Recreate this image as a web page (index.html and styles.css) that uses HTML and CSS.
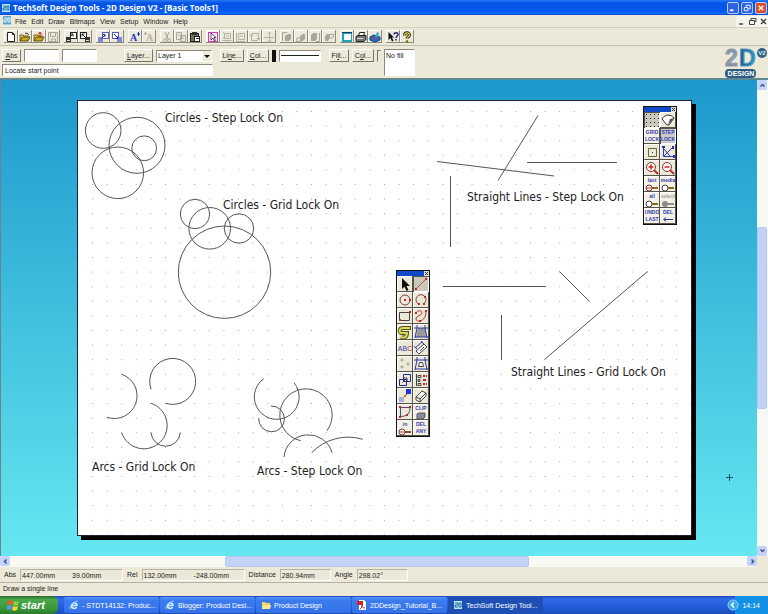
FILE: index.html
```
<!DOCTYPE html>
<html lang="en">
<head>
    <meta charset="utf-8">
    <title>TechSoft Design Tools - 2D Design V2 - [Basic Tools1]</title>
    <link rel="stylesheet" href="styles.css">
</head>
<body>
    <header class="title-bar">
        <svg class="app-icon" width="10" height="10" viewBox="0 0 10 10"><rect x="1" y="1" width="8" height="8" fill="#bfe6f5"/><path d="M2 3h3v2H2v2h3M6 3h2v4H6z" fill="none" stroke="#1b6f9c"/></svg>
        <h1>TechSoft Design Tools - 2D Design V2 - [Basic Tools1]</h1>
        <button class="win-btn" aria-label="Minimize"><svg viewBox="0 0 11 11"><path d="M2 8h4" stroke="#fff" stroke-width="2"/></svg></button>
        <button class="win-btn" aria-label="Restore"><svg viewBox="0 0 11 11"><path d="M4.500 4V2.500H9v4H7M2.500 5h4v3.500h-4z" fill="none" stroke="#fff"/></svg></button>
        <button class="win-btn close" aria-label="Close"><svg viewBox="0 0 11 11"><path d="M3 3l5 5M8 3l-5 5" stroke="#fff" stroke-width="1.5"/></svg></button>
    </header>

    <nav class="menu-bar">
        <svg class="app-icon" width="10" height="10" viewBox="0 0 10 10"><rect x="1" y="0" width="8" height="9" fill="#5aa6c8"/><path d="M2 2h3v2H2v2h3M6 2h2v4H6zM0 9h9" fill="none" stroke="#e4f6fc"/></svg>
        <button>File</button>
        <button>Edit</button>
        <button>Draw</button>
        <button>Bitmaps</button>
        <button>View</button>
        <button>Setup</button>
        <button>Window</button>
        <button>Help</button>
        <div class="doc-controls">
            <button aria-label="Minimize document"><svg width="9" height="9" viewBox="0 0 9 9"><path d="M2 7h4" stroke="#444" stroke-width="1.5"/></svg></button>
            <button aria-label="Restore document"><svg width="9" height="9" viewBox="0 0 9 9"><path d="M3 3.500V1.500h5v3H6.500M1.500 3.500h5v4h-5z" fill="none" stroke="#444"/></svg></button>
            <button aria-label="Close document"><svg width="9" height="9" viewBox="0 0 9 9"><path d="M2 2l5 5M7 2L2 7" stroke="#444" stroke-width="1.5"/></svg></button>
        </div>
    </nav>

    <div class="toolbar">
        <div class="group">
            <button aria-label="New"><svg viewBox="0 0 12 12"><path d="M2.500 1.500h5l2 2v7h-7z" fill="#fff" stroke="#222"/><path d="M7.500 1.500v2h2" fill="none" stroke="#222"/></svg></button>
            <button aria-label="Open"><svg viewBox="0 0 12 12"><path d="M1 10V4h3l1 1h4v2" fill="#f5e36a" stroke="#6b5d10"/><path d="M1 10l2-4h8l-2 4z" fill="#c9a227" stroke="#5d4c08"/><path d="M6 2.500c2-1 3 0 3.500 1.500" fill="none" stroke="#222"/></svg></button>
            <button aria-label="Insert"><svg viewBox="0 0 12 12"><path d="M1 10V4h3l1 1h4v2" fill="#f5e36a" stroke="#6b5d10"/><path d="M1 10l2-4h8l-2 4z" fill="#c9a227" stroke="#5d4c08"/><path d="M7 6V2M5 3.500L7 1l2 2.500" fill="none" stroke="#c22"/></svg></button>
            <button aria-label="Save" disabled><svg viewBox="0 0 12 12"><path d="M1.500 1.500h9v9h-9zM3.500 1.500v4h5v-4M4.500 10V8h4v2" fill="none" stroke="#aaa79a"/></svg></button>
        </div>
        <div class="group">
            <button aria-label="Import picture"><svg viewBox="0 0 12 12"><rect x="5.500" y="1.500" width="6" height="6" fill="#fff" stroke="#222"/><path d="M1 6h5v5H1z" fill="#333"/><path d="M4 7l4-4M5.500 3H8v2.500" fill="none" stroke="#222"/><path d="M2 9.500h3" stroke="#ddd"/></svg></button>
            <button aria-label="Export picture"><svg viewBox="0 0 12 12"><rect x="1.500" y="1.500" width="6" height="6" fill="#fff" stroke="#222"/><path d="M6 6h5v5H6z" fill="#333"/><path d="M3 3l5 5M3 5.500V3h2.500" fill="none" stroke="#222"/><path d="M7 9.500h3" stroke="#ddd"/></svg></button>
        </div>
        <div class="group">
            <button aria-label="Load section"><svg viewBox="0 0 12 12"><rect x="5.500" y="1.500" width="6" height="6" fill="#fff" stroke="#5561b5"/><path d="M1 6h5v5H1z" fill="#7f8bd6"/><path d="M4 8l4-4M5.500 3.500H8V6" fill="none" stroke="#1f2a96"/></svg></button>
            <button aria-label="Save section"><svg viewBox="0 0 12 12"><rect x="1.500" y="1.500" width="6" height="6" fill="#fff" stroke="#5561b5"/><path d="M6 6h5v5H6z" fill="#7f8bd6"/><path d="M3 3l4 4M4.500 7.500H7V5" fill="none" stroke="#1f2a96"/></svg></button>
        </div>
        <div class="group">
            <button aria-label="Text style"><svg viewBox="0 0 12 12"><text class="glyph blue" x="1" y="10">A</text><path d="M9.500 1v4M8 3h3" stroke="#2231c0"/></svg></button>
            <button aria-label="Edit text" disabled><svg viewBox="0 0 12 12"><text class="glyph grey" x="3" y="10">A</text><path d="M1 2.500h3M2.500 1v3" stroke="#aaa79a"/></svg></button>
        </div>
        <div class="group">
            <button aria-label="Cut" disabled><svg viewBox="0 0 12 12"><path d="M4 1l3 7M8 1L5 8" stroke="#aaa79a"/><circle cx="4" cy="9.500" r="1.500" fill="none" stroke="#aaa79a"/><circle cx="8" cy="9.500" r="1.500" fill="none" stroke="#aaa79a"/></svg></button>
            <button aria-label="Copy" disabled><svg viewBox="0 0 12 12"><path d="M1.500 1.500h5v7h-5zM5.500 4.500h5v6h-5zM3 4h2M7 7h2" fill="none" stroke="#aaa79a"/></svg></button>
            <button aria-label="Paste"><svg viewBox="0 0 12 12"><rect x="1.500" y="2.500" width="8" height="8" fill="#75744a" stroke="#222"/><rect x="3" y="1" width="5" height="3" fill="#333"/><rect x="5.500" y="5.500" width="5" height="5" fill="#fff" stroke="#223"/><path d="M7 7.500h3" stroke="#334"/></svg></button>
        </div>
        <div class="group">
            <button aria-label="Select" class="pressed"><svg viewBox="0 0 12 12"><rect x="1.500" y="1.500" width="9" height="9" fill="#fbe3f6" stroke="#d03cb8"/><path d="M4 2v7l2-2 1.500 3 1-.5L7 6.500h2z" fill="#fff" stroke="#333" stroke-width=".8"/></svg></button>
            <button aria-label="Group" disabled><svg viewBox="0 0 12 12"><path d="M1.500 9.500h9M3.500 2.500h6v5h-6zM2 2h1M5 5h3M2 7h1" fill="none" stroke="#b5b2a4"/></svg></button>
            <button aria-label="Ungroup" disabled><svg viewBox="0 0 12 12"><path d="M1.500 2v8.500H10M3.500 2.500h6v6h-6zM5 5h3" fill="none" stroke="#b5b2a4"/></svg></button>
            <button aria-label="Rotate" disabled><svg viewBox="0 0 12 12"><path d="M3 2.500h6.500V9M9 9.500H2.500V4M1 5l1.500-2L4 5M8 7l1.500 2L11 7" fill="none" stroke="#b5b2a4"/></svg></button>
            <button aria-label="Move" disabled><svg viewBox="0 0 12 12"><path d="M6.500 1v10M1 6.500h10M5 2.500L6.500 1 8 2.500M5 9.500L6.500 11 8 9.500" fill="none" stroke="#b5b2a4"/></svg></button>
        </div>
        <div class="group">
            <button aria-label="Bring to front" disabled><svg viewBox="0 0 12 12"><path d="M4 5l3-2h3v5l-2 2H4z" fill="#aaa79a"/><path d="M1.500 10V1.500H6" fill="none" stroke="#aaa79a"/></svg></button>
            <button aria-label="Send to back" disabled><svg viewBox="0 0 12 12"><path d="M5 5l3-2h2v5l-2 2H5z" fill="#aaa79a"/><path d="M1 10.500h5V7H2z" fill="none" stroke="#aaa79a"/></svg></button>
            <button aria-label="Forward one" disabled><svg viewBox="0 0 12 12"><path d="M2 4l2-2h4v6l-2 2H2z" fill="#aaa79a"/><path d="M10.500 2v8.500H7" fill="none" stroke="#aaa79a"/></svg></button>
            <button aria-label="Back one" disabled><svg viewBox="0 0 12 12"><path d="M2 5l2-2h3v4l-2 3H2z" fill="#aaa79a"/><path d="M7 3.500h4L9.500 7H7" fill="none" stroke="#aaa79a"/></svg></button>
        </div>
        <div class="group">
            <button aria-label="Full screen"><svg viewBox="0 0 12 12"><rect x="1" y="1" width="10" height="10" fill="#18a7b0"/><rect x="3" y="3" width="7" height="6" fill="#fff"/><path d="M1 1.500h10" stroke="#137"/></svg></button>
            <button aria-label="Print"><svg viewBox="0 0 12 12"><path d="M3.500 5l1-3.500h5L8.500 5" fill="#fff" stroke="#222"/><path d="M1 5.500l2-1h8v4l-2 2H1z" fill="#777" stroke="#222"/><path d="M2 7.500h6" stroke="#ddd"/></svg></button>
            <button aria-label="Cutter"><svg viewBox="0 0 12 12"><path d="M1 6l4-2 6 2v3l-5 2-5-2z" fill="#1f6fc4" stroke="#123a80"/><path d="M6 6l2-5 2 1-1 5z" fill="#35b0d6"/><path d="M3 6l2 2 4-2" fill="none" stroke="#d33"/></svg></button>
        </div>
        <div class="group">
            <button aria-label="Context help"><svg viewBox="0 0 12 12"><path d="M1.500 1v8l2-2 1.500 3.500 1.500-.7L5 6.500h2z" fill="#111"/><path d="M7 3.500C7 1 11 1 11 3.500c0 1.500-2 1.500-2 3.500M9 8v1.500" fill="none" stroke="#26268e" stroke-width="1.5"/></svg></button>
            <button aria-label="Help"><svg viewBox="0 0 12 12"><path d="M3.500 4.500c0-3.500 5-3.500 5-.5 0 1.500-2.500 2-2.500 3.500" fill="none" stroke="#222" stroke-width="3"/><path d="M3.500 4.500c0-3.500 5-3.500 5-.5 0 1.500-2.500 2-2.500 3.500" fill="none" stroke="#e9dc3a" stroke-width="1.2"/><circle cx="6" cy="10.500" r="1.200" fill="#6b6410"/></svg></button>
        </div>
    </div>

    <div class="options">
        <div class="options-main">
            <div class="options-row">
                <button class="push abs"><u>A</u>bs</button>
                <input type="text" class="coord" aria-label="X coordinate">
                <input type="text" class="coord" aria-label="Y coordinate">
                <button class="push layer"><u>L</u>ayer...</button>
                <div class="select-wrap">
                    <select aria-label="Layer"><option>Layer 1</option></select>
                    <svg width="8" height="10" viewBox="0 0 8 10"><path d="M1 4h6L4 7z" fill="#111"/></svg>
                </div>
                <button class="push line">Li<u>n</u>e...</button>
                <button class="push col"><u>C</u>ol...</button>
                <span class="swatch black"></span>
                <span class="line-sample"><span></span></span>
                <button class="push fill">Fi<u>l</u>l...</button>
                <button class="push col">C<u>o</u>l...</button>
                <span class="swatch"></span>
            </div>
            <div class="prompt">Locate start point</div>
        </div>
        <div class="fill-box">No fill</div>
        <svg class="logo" width="44" height="32" viewBox="0 0 44 32">
            <defs>
                <linearGradient id="steel" x1="0" y1="0" x2="0" y2="1"><stop offset="0" stop-color="#71879f"/><stop offset=".5" stop-color="#9aa7b5"/><stop offset="1" stop-color="#6d7f95"/></linearGradient>
                <linearGradient id="sea" x1="0" y1="0" x2="1" y2="0"><stop offset="0" stop-color="#1b4f86"/><stop offset="1" stop-color="#2a9ac8"/></linearGradient>
            </defs>
            <text class="logo-big" x="1" y="19" fill="url(#steel)" stroke="#8c9bac">2</text>
            <text class="logo-big" x="15" y="19" fill="url(#sea)" stroke="#5b9cc4" stroke-width="1">D</text>
            <rect x="1" y="22" width="31" height="9" rx="4" fill="#2d5b82"/>
            <text class="logo-small" x="17" y="29" text-anchor="middle" fill="#fff">DESIGN</text>
            <circle cx="38" cy="6" r="5" fill="#2d6187"/>
            <text class="logo-tiny" x="38" y="8" text-anchor="middle" fill="#d9ecf5">V2</text>
        </svg>
    </div>

    <main class="workspace">
        <div class="desk">
            <div class="sheet">
                <svg class="drawing" width="100%" height="100%">
                    <defs>
                        <pattern id="grid" x="14" y="10" width="14.6" height="14.6" patternUnits="userSpaceOnUse"><rect width="1" height="1" fill="#a4a4a4"/></pattern>
                    </defs>
                    <rect width="100%" height="100%" fill="url(#grid)"/>
                    <g class="ink" transform="translate(-78 -101)">
                        <!-- circles, step lock -->
                        <circle cx="103.2" cy="130.5" r="17.8"/>
                        <circle cx="137" cy="145.3" r="28"/>
                        <circle cx="144.2" cy="148.3" r="12.4"/>
                        <circle cx="117.8" cy="172.8" r="25.8"/>
                        <!-- circles, grid lock -->
                        <circle cx="195" cy="214" r="14.7"/>
                        <circle cx="209.7" cy="228.3" r="20.8"/>
                        <circle cx="239" cy="228.5" r="14.7"/>
                        <circle cx="224.5" cy="272.2" r="46.2"/>
                        <!-- arcs, grid lock -->
                        <path d="M121.7 374.3A22.7 22.7 0 0 1 107 417.3"/>
                        <path d="M151 389A23 23 0 1 1 165.7 403.3"/>
                        <path d="M151 403.3A23.3 23.3 0 1 1 121.7 432.7"/>
                        <path d="M151 432.7A14.7 14.7 0 0 0 180.3 432.7"/>
                        <!-- arcs, step lock -->
                        <path d="M263.7 378.7A22.4 22.4 0 1 0 294 382.7"/>
                        <path d="M271 406A12.9 12.9 0 1 1 258.7 418"/>
                        <path d="M327 430.7A26.2 26.2 0 1 0 300.7 440.7"/>
                        <path d="M284 457A24.5 24.5 0 0 1 332 452.7"/>
                        <path d="M311.7 452.7A50.5 50.5 0 0 1 362.7 439.3"/>
                        <!-- lines, step lock -->
                        <path d="M437 161.5L554 176M538 115.5L498 180.5M527 162.5H617M450.5 176V247"/>
                        <!-- lines, grid lock -->
                        <path d="M443 286.5H546M559.5 271.5L589.5 301.5M647.5 271.5L544.5 359.5M501.5 315V360"/>
                    </g>
                    <g class="label" transform="translate(-78 -101)">
                        <text x="165" y="122">Circles - Step Lock On</text>
                        <text x="223" y="209">Circles - Grid Lock On</text>
                        <text x="467" y="201">Straight Lines - Step Lock On</text>
                        <text x="511" y="376">Straight Lines - Grid Lock On</text>
                        <text x="92" y="471">Arcs - Grid Lock On</text>
                        <text x="257" y="475">Arcs - Step Lock On</text>
                    </g>
                </svg>

                <div class="palette tools">
                    <div class="palette-title"><button aria-label="Close tools"><svg viewBox="0 0 5 5"><path d="M1 1l3 3M4 1L1 4" stroke="#333"/></svg></button></div>
                    <div class="palette-grid">
                        <button aria-label="Select"><svg viewBox="0 0 16 16"><path d="M5 2v11l2.500-2.300L9.500 15l2-1-2-4H13z" fill="#111"/></svg></button>
                        <button aria-label="Line" class="pressed"><svg viewBox="0 0 16 16"><path d="M3 13L13 3" stroke="#b55"/><path d="M2 12h2v2H2zM12 2h2v2h-2z" fill="#c22"/></svg></button>
                        <button aria-label="Circle"><svg viewBox="0 0 16 16"><circle cx="8" cy="8" r="5" fill="none" stroke="#7a4040"/><path d="M7 7h2v2H7zM12 7h2v2h-2z" fill="#c22"/></svg></button>
                        <button aria-label="Arc"><svg viewBox="0 0 16 16"><path d="M5.500 12A5 5 0 1 1 10.500 12" fill="none" stroke="#8a4040"/><path d="M5 11h2v2H5zM10 11h2v2h-2zM11 4h2v2h-2z" fill="#c22"/></svg></button>
                        <button aria-label="Rectangle"><svg viewBox="0 0 16 16"><path d="M2.500 4.500h10v8h-10z" fill="none" stroke="#444"/><path d="M2 11h2v2H2zM12 3h2v2h-2z" fill="#c22"/></svg></button>
                        <button aria-label="Curve"><svg viewBox="0 0 16 16"><path d="M3 5c1-3 6-3 6 0 0 2-6 3-6 6 0 4 10 3 10-7" fill="none" stroke="#a33"/><path d="M2 4h2v2H2zM12 2h2v2h-2zM6 12h2v2H6z" fill="#c22"/></svg></button>
                        <button aria-label="Thick path"><svg viewBox="0 0 16 16"><path d="M14 4H6C2 4 2 8 4 9h6c0 5-4 5-6 4" fill="none" stroke="#555511" stroke-width="4"/><path d="M13 4H6C2 4 2 8 4 9h6c0 5-4 5-6 4" fill="none" stroke="#d6d65a" stroke-width="2"/></svg></button>
                        <button aria-label="Fill"><svg viewBox="0 0 16 16"><path d="M5 4h7l1 9H3z" fill="#999"/><path d="M4 1v3H1M12 1v3h3M2 13h13M4 4L2 14M12 4l2 10M4 4h8" fill="none" stroke="#2a39a8"/></svg></button>
                        <button aria-label="Text"><svg viewBox="0 0 16 16"><text class="abc" x="8" y="11" text-anchor="middle">AB<tspan fill="#b22">C</tspan></text></svg></button>
                        <button aria-label="Dimension"><svg viewBox="0 0 16 16"><path d="M3 11l8-7 3 3-8 7z" fill="#fff" stroke="#444"/><path d="M2 8l7-6M1 6l3 3M8 1l3 3M7 11l4-4" stroke="#2a39a8" fill="none"/></svg></button>
                        <button aria-label="Points"><svg viewBox="0 0 16 16"><g fill="none" stroke="#9a9a8c"><circle cx="5" cy="4" r="1"/><circle cx="11" cy="8" r="1"/><circle cx="5" cy="11" r="1"/></g></svg></button>
                        <button aria-label="Contour"><svg viewBox="0 0 16 16"><path d="M4 1v3H1M12 1v3h3M2 13h13M4 4L2 14M12 4l2 10M4 4h8" fill="none" stroke="#2a39a8"/><path d="M6.500 6.500h3l1 4h-5z" fill="#fff" stroke="#444"/></svg></button>
                        <button aria-label="Copy shape"><svg viewBox="0 0 16 16"><path d="M6.500 2.500h7v7h-7zM2.500 7.500h7v6h-7z" fill="none" stroke="#222d9c"/><path d="M5.500 10.500l4-4M7 6h3v3" fill="none" stroke="#444"/></svg></button>
                        <button aria-label="Align"><svg viewBox="0 0 16 16"><path d="M3.500 2v12M5 3.500h3v2H5zM5 7.500h2v2H5zM5 11.500h3v2H5z" fill="none" stroke="#444"/><path d="M10 3h2v2h-2zM13 3h1v2h-1zM10 7h3v2h-3zM10 11h2v2h-2zM13 11h1v2h-1z" fill="#c22"/></svg></button>
                        <button aria-label="Transform"><svg viewBox="0 0 16 16"><path d="M9 1h5v5H9z" fill="#2231d8"/><path d="M2 9h5v5H2z" fill="#a9b2dc"/><path d="M7 9l3-3" stroke="#444"/><path d="M7 7h2v2H7z" fill="#c63"/></svg></button>
                        <button aria-label="Delete part"><svg viewBox="0 0 16 16"><path d="M3 9l6-6 4 2v3l-6 6-4-2zM3 9l4 2 6-6M7 11v3" fill="#fff" stroke="#444"/></svg></button>
                        <button aria-label="Edit points"><svg viewBox="0 0 16 16"><path d="M3.500 3.500H13c0 6-3 9-9.500 9z" fill="none" stroke="#4a4a80"/><path d="M2 2h2v2H2zM12 2h2v2h-2zM2 12h2v2H2zM9 10h2v2H9z" fill="#c22"/></svg></button>
                        <button class="stack"><span>CLIP</span><svg class="half" viewBox="0 0 16 8"><path d="M4 2l2-1h6v4l-2 2H4z" fill="#8c8ca0" stroke="#556"/></svg></button>
                        <button class="stack"><span>in</span><svg class="half" viewBox="0 0 16 8"><path d="M8 4h6" stroke="#8a4a3c" stroke-width="2"/><circle cx="5" cy="4" r="3" fill="#fff" stroke="#733"/><path d="M3 4h4" stroke="#c22"/></svg></button>
                        <button class="stack"><span>DEL</span><span>ANY</span></button>
                    </div>
                </div>

                <div class="palette view">
                    <div class="palette-title"><button aria-label="Close view"><svg viewBox="0 0 5 5"><path d="M1 1l3 3M4 1L1 4" stroke="#333"/></svg></button></div>
                    <div class="palette-grid">
                        <button aria-label="Grid" class="pressed"><svg viewBox="0 0 16 16"><path d="M2 2.500h13M2 6.500h13M2 10.500h13M2 14.500h13" stroke="#222" stroke-dasharray="1 3"/></svg></button>
                        <button aria-label="Redraw"><svg viewBox="0 0 16 16"><path d="M2 7c3-5 9-5 12-1l-5 7H7z" fill="#fff" stroke="#333"/><path d="M8 13l6-7-4 1z" fill="#555"/></svg></button>
                        <button class="stack"><span>GRID</span><span>LOCK</span></button>
                        <button class="stack pressed"><span>STEP</span><span>LOCK</span></button>
                        <button aria-label="Attach"><svg viewBox="0 0 16 16"><path d="M4.500 4.500h8v8h-8z" fill="none" stroke="#66663a"/><path d="M8 8h1v1H8z" fill="#333"/></svg></button>
                        <button aria-label="Axes"><svg viewBox="0 0 16 16"><path d="M3.500 3v9.500H14M4 12l9-9M4 5l6 7" fill="none" stroke="#2a39c0"/><path d="M2 2h3v2H2zM12 2h2v3h-2zM13 11h2v3h-2z" fill="#2231c0"/></svg></button>
                        <button aria-label="Zoom in"><svg viewBox="0 0 16 16"><path d="M10 10l4 4" stroke="#a33" stroke-width="2"/><circle cx="7" cy="7" r="4.500" fill="#fff" stroke="#833"/><path d="M4.500 7h5M7 4.500v5" stroke="#c22" stroke-width="1.5"/></svg></button>
                        <button aria-label="Zoom out"><svg viewBox="0 0 16 16"><path d="M10 10l4 4" stroke="#a33" stroke-width="2"/><circle cx="7" cy="7" r="4.500" fill="#fff" stroke="#833"/><path d="M4.500 7h5" stroke="#c22" stroke-width="1.5"/></svg></button>
                        <button class="stack"><span>last</span><svg class="half" viewBox="0 0 16 8"><path d="M8 4h6" stroke="#8a6a1c" stroke-width="2"/><circle cx="5" cy="4" r="3" fill="#fff" stroke="#733"/><path d="M3 4h4" stroke="#c22"/></svg></button>
                        <button class="stack"><span>media</span><svg class="half" viewBox="0 0 16 8"><path d="M8 4h6" stroke="#8a6a1c" stroke-width="2"/><circle cx="5" cy="4" r="3" fill="#fff" stroke="#444"/></svg></button>
                        <button class="stack"><span>all</span><svg class="half" viewBox="0 0 16 8"><path d="M8 4h6" stroke="#8a6a1c" stroke-width="2"/><circle cx="5" cy="4" r="3" fill="#fff" stroke="#444"/></svg></button>
                        <button class="stack" disabled><span>select</span><svg class="half" viewBox="0 0 16 8"><path d="M8 4h6" stroke="#8d8d85" stroke-width="2"/><circle cx="5" cy="4" r="3" fill="#8d8d85"/></svg></button>
                        <button class="stack"><span>UNDO</span><span>LAST</span></button>
                        <button class="stack"><span>DEL</span><svg class="half" viewBox="0 0 16 8"><path d="M13 3.500H4M6 1.500l-2.500 2L6 5.500" fill="none" stroke="#2a39a8"/></svg></button>
                    </div>
                </div>
            </div>
            <svg class="cross" width="7" height="7" viewBox="0 0 7 7"><path d="M3.500 0v7M0 3.500h7" stroke="#1d5560"/></svg>
        </div>
        <div class="scroll vertical">
            <button aria-label="Scroll up"><svg width="7" height="7" viewBox="0 0 7 7"><path d="M1.500 4.500l2-2 2 2" fill="none" stroke="#3c5585" stroke-width="1.5"/></svg></button>
            <span class="track before"></span><span class="thumb"></span><span class="track after"></span>
            <button aria-label="Scroll down"><svg width="7" height="7" viewBox="0 0 7 7"><path d="M1.500 2.500l2 2 2-2" fill="none" stroke="#3c5585" stroke-width="1.5"/></svg></button>
        </div>
        <div class="scroll horizontal">
            <button aria-label="Scroll left"><svg width="7" height="7" viewBox="0 0 7 7"><path d="M4.500 1.500l-2 2 2 2" fill="none" stroke="#3c5585" stroke-width="1.5"/></svg></button>
            <span class="track before"></span><span class="thumb"></span><span class="track after"></span>
            <button aria-label="Scroll right"><svg width="7" height="7" viewBox="0 0 7 7"><path d="M2.500 1.500l2 2-2 2" fill="none" stroke="#3c5585" stroke-width="1.5"/></svg></button>
        </div>
    </main>

    <div class="status">
        <span>Abs</span>
        <div class="readout pair"><span>447.00mm</span><span>39.00mm</span></div>
        <span>Rel</span>
        <div class="readout pair"><span>132.00mm</span><span>-248.00mm</span></div>
        <span>Distance</span>
        <div class="readout"><span>280.94mm</span></div>
        <span>Angle</span>
        <div class="readout"><span>298.02°</span></div>
    </div>
    <div class="hint">Draw a single line</div>

    <footer class="taskbar">
        <button class="start">
            <svg width="12" height="12" viewBox="0 0 12 12"><path d="M1 2c2-1 3-1 5 0L5 6C3 5 2 5 0 6z" fill="#f0562a"/><path d="M7 2c2 1 3 1 5 0l-1 4c-2 1-3 1-5 0z" fill="#8cd03f"/><path d="M0 7c2-1 3-1 5 0l-1 4c-2-1-3-1-4 0z" fill="#4f9bf5"/><path d="M6 7c2 1 3 1 5 0l-1 4c-2 1-3 1-5 0z" fill="#fbd23c"/></svg>
            start
        </button>
        <button class="task">
            <svg width="10" height="10" viewBox="0 0 10 10"><path d="M2 5.500h6C8 2 3 2 2.500 5.500S7 9 7.500 7" fill="none" stroke="#d4ecff" stroke-width="1.5"/><path d="M1 9C0 6 5 1 9 1" fill="none" stroke="#8fd0ff"/></svg>
            <span>- STDT14132: Produc...</span>
        </button>
        <button class="task">
            <svg width="10" height="10" viewBox="0 0 10 10"><path d="M2 5.500h6C8 2 3 2 2.500 5.500S7 9 7.500 7" fill="none" stroke="#d4ecff" stroke-width="1.5"/><path d="M1 9C0 6 5 1 9 1" fill="none" stroke="#8fd0ff"/></svg>
            <span>Blogger: Product Desi...</span>
        </button>
        <button class="task">
            <svg width="10" height="10" viewBox="0 0 10 10"><path d="M1 2h3l1 1h4v6H1z" fill="#f0d45e"/><path d="M1 9l1-4h8L9 9z" fill="#fbe993"/></svg>
            <span>Product Design</span>
        </button>
        <button class="task">
            <svg width="10" height="10" viewBox="0 0 10 10"><path d="M2 0h5l2 2v8H2z" fill="#fff"/><path d="M0 1h6v4H0z" fill="#c9252b"/><path d="M3 9c2-1 2-3 2-4 0 2 1 3 3 3" fill="none" stroke="#c9252b"/></svg>
            <span>2DDesign_Tutorial_B...</span>
        </button>
        <button class="task active">
            <svg width="10" height="10" viewBox="0 0 10 10"><rect x="1" y="1" width="8" height="8" fill="#bfe6f5"/><path d="M2 3h3v2H2v2h3M6 3h2v4H6z" fill="none" stroke="#1b6f9c"/></svg>
            <span>TechSoft Design Tool...</span>
        </button>
        <div class="tray">
            <button aria-label="Show hidden icons"><svg width="12" height="12" viewBox="0 0 12 12"><circle cx="6" cy="6" r="5" fill="#3aa5ee" stroke="#8cd1fb"/><path d="M7 3.500L4.500 6 7 8.500" fill="none" stroke="#fff" stroke-width="1.5"/></svg></button>
            <time>14:14</time>
        </div>
    </footer>
</body>
</html>
```
FILE: styles.css
```
* {
    box-sizing: border-box;
}
body {
    display: flex;
    flex-direction: column;
    height: 100vh;
    margin: 0;
    overflow: hidden;
    background-color: #ece9d8;
    color: #222;
    font-family: "Liberation Sans", Arial, sans-serif;
    font-size: 7px;
    line-height: 9px;
}
button, input, select {
    margin: 0;
    padding: 0;
    border: none;
    background: none;
    color: inherit;
    font: inherit;
}
svg {
    display: block;
    flex: none;
}

/* Title and menus */
.title-bar {
    display: flex;
    align-items: center;
    gap: 2px;
    height: 15px;
    padding: 0 1px;
    background: linear-gradient(#2a7bf5, #0453e4 20%, #0458ee 70%, #0a68fb 90%, #0444c4);
    color: #fff;
}
.title-bar h1 {
    flex: 1;
    margin: 0;
    font-family: "Open Sans", sans-serif;
    font-size: 8px;
    font-weight: bold;
}
.win-btn {
    width: 12px;
    height: 12px;
    border: 1px solid #b9cdf8;
    border-radius: 2px;
    background-color: #2c63e2;
}
.win-btn svg {
    width: 10px;
    height: 10px;
}
.win-btn.close {
    background-color: #dd4f28;
}
.menu-bar {
    display: flex;
    align-items: center;
    height: 13px;
    padding-left: 2px;
    border-bottom: 1px solid #d2cfbf;
}
.menu-bar > button {
    margin-right: 5px;
}
.menu-bar .app-icon {
    margin-right: 3px;
}
.doc-controls {
    display: flex;
    gap: 2px;
    margin-left: auto;
    padding: 1px 0 1px 1px;
    background-color: #f6f5ee;
}

/* Icon toolbar */
.toolbar {
    display: flex;
    align-items: center;
    gap: 4px;
    height: 18px;
    padding: 0 4px;
    border-bottom: 1px solid #c4c1b1;
}
.group {
    display: flex;
}
.group button {
    width: 14px;
    height: 13px;
    padding-left: 1px;
    box-shadow: inset -1px -1px #8d8a7c, inset 1px 1px #fff;
}
.group svg {
    width: 12px;
    height: 12px;
}
.group .pressed {
    background-color: #f6eef0;
}
.glyph {
    font-family: "Liberation Serif", serif;
    font-size: 10px;
    font-weight: bold;
}
.blue {
    fill: #2231c0;
}
.grey {
    fill: #b5b2a4;
}

/* Drawing options */
.options {
    display: flex;
    gap: 3px;
    height: 34px;
    padding: 3px 0 2px 2px;
    border-bottom: 2px solid #5c8a92;
}
.options-main {
    display: flex;
    flex-direction: column;
    gap: 2px;
}
.options-row {
    display: flex;
    align-items: center;
    gap: 3px;
}
.push {
    height: 13px;
    border: 1px solid;
    border-color: #fff #77756a #77756a #fff;
}
.abs {
    width: 19px;
}
.layer {
    width: 29px;
    margin-left: 24px;
}
.line {
    width: 24px;
    margin-left: 5px;
}
.col {
    width: 22px;
}
.fill {
    width: 20px;
    margin-left: 5px;
}
.coord, .select-wrap, .line-sample, .fill-box, .prompt {
    border: 1px solid;
    border-color: #8d8a7c #fff #fff #8d8a7c;
    background-color: #fff;
}
.coord {
    width: 35px;
    height: 13px;
}
.select-wrap {
    display: flex;
    align-items: center;
    width: 56px;
    height: 12px;
}
.select-wrap select {
    flex: 1;
    padding-left: 1px;
    appearance: none;
}
.select-wrap svg {
    background-color: #ece9d8;
}
.swatch {
    width: 4px;
    height: 12px;
    border: 1px solid;
    border-color: #77756a #ece9d8 #ece9d8 #77756a;
}
.swatch.black {
    border: none;
    background-color: #111;
}
.line-sample {
    display: flex;
    align-items: center;
    width: 42px;
    height: 12px;
    padding: 0 1px;
}
.line-sample span {
    flex: 1;
    height: 1px;
    background-color: #222;
}
.prompt {
    width: 211px;
    height: 12px;
    padding: 0 2px;
    line-height: 11px;
}
.fill-box {
    width: 31px;
    padding: 1px;
}
.logo {
    margin: -2px 0 0 auto;
    overflow: visible;
}
.logo-big, .logo-small, .logo-tiny {
    font-weight: bold;
}
.logo-big {
    font-size: 23px;
}
.logo-small {
    font-size: 7px;
}
.logo-tiny {
    font-size: 6px;
}

/* Workspace */
.workspace {
    display: grid;
    flex: 1;
    grid-template-columns: 1fr 11px;
    grid-template-rows: 1fr 11px;
    min-height: 0;
}
.desk {
    position: relative;
    display: flex;
    padding: 20px 65px 20px 76px;
    border-left: 1px solid #5c8a92;
    background: linear-gradient(#1c98cc, #67e7f1);
}
.sheet {
    position: relative;
    flex: 1;
    border: 1px solid #223;
    background-color: #fff;
    box-shadow: 4px 4px 0 #000;
}
.drawing {
    position: absolute;
    inset: 0;
}
.ink {
    fill: none;
    stroke: #555;
    stroke-width: 1;
}
.label {
    fill: #222;
    font-family: "DejaVu Sans Condensed", "DejaVu Sans", sans-serif;
    font-size: 12px;
}
.cross {
    position: absolute;
    left: 725px;
    top: 394px;
}

/* Floating tool palettes */
.palette {
    position: absolute;
    width: 34px;
    border: 1px solid #111;
    background-color: #ece9d8;
}
.tools {
    left: 318px;
    top: 169px;
}
.view {
    left: 565px;
    top: 5px;
}
.palette-title {
    display: flex;
    justify-content: flex-end;
    height: 5px;
    background-color: #1049c8;
}
.palette-title button {
    width: 5px;
    height: 5px;
    background-color: #ddd;
}
.palette-grid {
    display: grid;
    grid-template-columns: 1fr 1fr;
}
.palette-grid button {
    height: 16px;
    box-shadow: inset -1px -1px #55534a, inset 1px 1px #fff;
}
.palette-grid svg {
    width: 16px;
    height: 16px;
}
.palette-grid .pressed {
    box-shadow: inset 1px 1px #55534a, inset -1px -1px #fff;
    background-color: #cbc8bb;
}
.palette-grid .stack {
    display: flex;
    flex-direction: column;
    align-items: center;
    justify-content: center;
    background-color: #f3f1e6;
    color: #3340b0;
    font-size: 5px;
    font-weight: bold;
    line-height: 7px;
}
.palette-grid .stack.pressed {
    background-color: #cbc9cc;
}
.palette-grid .stack:disabled {
    color: #a4a49c;
}
.palette-grid .half {
    height: 8px;
}
.abc {
    fill: #3340b0;
    font-size: 7px;
}

/* Scroll bars */
.scroll {
    display: flex;
    background-color: #f9f9f4;
}
.vertical {
    flex-direction: column;
    padding-right: 1px;
}
.scroll button {
    display: flex;
    align-items: center;
    justify-content: center;
    width: 10px;
    height: 10px;
    border-radius: 2px;
    background-color: #c4d3fa;
}
.thumb {
    border: 1px solid #b4c6f2;
    border-radius: 2px;
    background-color: #c4d2f8;
}
.vertical .before {
    flex: 138;
}
.vertical .thumb {
    flex: 180;
}
.vertical .after {
    flex: 138;
}
.horizontal .before {
    flex: 215;
}
.horizontal .thumb {
    flex: 303;
}
.horizontal .after {
    flex: 218;
}

/* Status lines */
.status {
    display: flex;
    align-items: center;
    gap: 4px;
    height: 16px;
    padding: 0 4px;
    border-bottom: 1px solid #b5b2a4;
}
.readout {
    display: flex;
    width: 51px;
    height: 12px;
    padding-left: 1px;
    border: 1px solid;
    border-color: #b5b2a4 #fff #fff #b5b2a4;
    line-height: 11px;
}
.readout.pair {
    width: 103px;
}
.readout span {
    flex: 1;
}
.hint {
    height: 13px;
    padding: 1px 3px;
}

/* Taskbar */
.taskbar {
    display: flex;
    gap: 1px;
    height: 18px;
    background: linear-gradient(#1d48b0, #2f6be8 15%, #245ddb 60%, #1c4dbc);
    color: #fff;
}
.start {
    display: flex;
    align-items: center;
    gap: 2px;
    width: 58px;
    margin-right: 5px;
    padding-left: 7px;
    border-radius: 0 6px 6px 0;
    background: linear-gradient(#2c6b2c, #4aa84a 20%, #3a963a 70%, #2a7a2a);
    font-size: 11px;
    font-style: italic;
    font-weight: bold;
}
.task {
    display: flex;
    align-items: center;
    gap: 3px;
    flex: 0 1 95px;
    margin: 1px 0;
    padding-left: 5px;
    border-radius: 2px;
    background: linear-gradient(#5a96fa, #3b7bee 20%, #3572e8);
    text-align: left;
    white-space: nowrap;
}
.task.active {
    background: #1e4fb4;
}
.tray {
    display: flex;
    align-items: center;
    gap: 3px;
    margin-left: auto;
    padding-right: 8px;
    background: linear-gradient(90deg, transparent 8px, #1290e4 8px);
}
```
